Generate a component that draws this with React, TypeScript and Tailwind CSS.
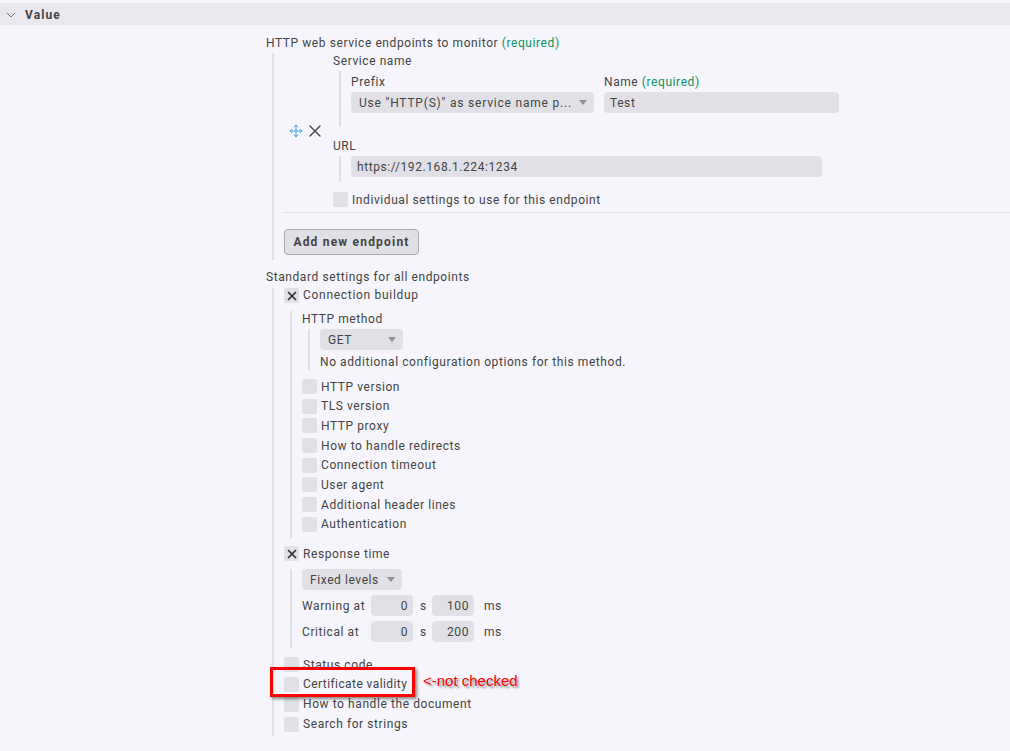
import { Move, X, ChevronDown } from 'lucide-react';
import type { ReactNode } from 'react';

function Caret() {
  return <span className="h-0 w-0 border-x-[4px] border-t-[5px] border-x-transparent border-t-[#8f8f95]" />;
}

function Checkbox({ checked = false, label, className = '', labelClass = 'pb-[2px]' }: { checked?: boolean; label: string; className?: string; labelClass?: string }) {
  return (
    <div className={`flex h-[15px] items-center ${className}`}>
      <span className="flex h-[15px] w-[15px] items-center justify-center rounded-[2px] bg-[#e0e0e6]">
        {checked && <X size={14} strokeWidth={3} className="text-[#333]" />}
      </span>
      <span className={`ml-[4px] ${labelClass}`}>{label}</span>
    </div>
  );
}

function Select({ label, className = '', labelClass = '' }: { label: string; className?: string; labelClass?: string }) {
  return (
    <div className={`flex h-[21px] items-center justify-between rounded-[4px] bg-[#e0e0e6] pl-[8px] pr-[7px] ${className}`}>
      <span className={`whitespace-nowrap ${labelClass}`}>{label}</span>
      <Caret />
    </div>
  );
}

function NumberBox({ value }: { value: string }) {
  return <div className="flex h-[21px] w-[42px] items-center justify-end rounded-[4px] bg-[#e0e0e6] pr-[5px]">{value}</div>;
}

function Nested({ children, className = '' }: { children: ReactNode; className?: string }) {
  return <div className={`border-l-2 border-[#dfdfe5] ${className}`}>{children}</div>;
}

const connectionOptions = [
  'HTTP version',
  'TLS version',
  'HTTP proxy',
  'How to handle redirects',
  'Connection timeout',
  'User agent',
  'Additional header lines',
  'Authentication',
];

export default function App() {
  return (
    <div className="relative h-[751px] w-[1010px] overflow-hidden bg-[#f5f5fb] pt-[3px] font-['Roboto',sans-serif] text-[12px] tracking-[0.58px] text-[#444]">
      {/* Section header */}
      <div className="flex h-[22px] items-center bg-[#e8e8ee] pl-[3px] pt-[1px] font-bold tracking-[1.1px] text-[#444]">
        <ChevronDown size={16} strokeWidth={1.2} className="text-[#555]" />
        <span className="ml-[6px]">Value</span>
      </div>

      <div className="pl-[266px]">
        <div className="flex h-[28px] items-end pb-[1px]">
          HTTP web service endpoints to monitor&nbsp;<span className="text-[#0c9464]">(required)</span>
        </div>

        <Nested className="ml-[6px] h-[207px] pl-[10px]">
          <div className="flex items-center">
            <div className="flex w-[49px] items-center pl-[5px] pt-[1px]">
              <Move size={14} strokeWidth={1.5} className="text-[#1e9fd6]" />
              <X size={20} strokeWidth={1.6} className="ml-[2px] text-[#444]" />
            </div>
            <div>
              <div className="flex h-[18px] items-center pb-[2px]">Service name</div>
              <Nested className="ml-[6px] mt-[0px] h-[56px] pl-[10px]">
                <div className="flex gap-[10px]">
                  <div className="w-[243px]">
                    <div className="flex h-[21px] items-end pb-[1px]">Prefix</div>
                    <Select label={'Use "HTTP(S)" as service name p...'} labelClass="tracking-[0.8px]" />
                  </div>
                  <div className="w-[235px]">
                    <div className="flex h-[21px] items-end pb-[1px]">
                      Name&nbsp;<span className="text-[#0c9464]">(required)</span>
                    </div>
                    <div className="flex h-[21px] items-center rounded-[4px] bg-[#e0e0e6] pl-[6px]">Test</div>
                  </div>
                </div>
              </Nested>
              <div className="flex h-[29px] items-end pb-[1px]">URL</div>
              <Nested className="ml-[6px] h-[26px] pl-[10px]">
                <div className="flex h-[21px] w-[471px] items-center rounded-[4px] bg-[#e0e0e6] pl-[6px]">
                  https://192.168.1.224:1234
                </div>
              </Nested>
              <Checkbox label="Individual settings to use for this endpoint" className="mt-[10px]" labelClass="" />
            </div>
          </div>
          <div className="mt-[5px] h-px bg-[#dfdfe5]" />
          <button className="mt-[16px] flex h-[26px] w-[135px] items-center justify-center rounded-[4px] border border-[#a9a9af] bg-[#e0e0e6] font-bold tracking-[1.2px] text-[#444]">
            Add new endpoint
          </button>
        </Nested>

        <div className="flex h-[28px] items-end pb-[2px]">Standard settings for all endpoints</div>

        <Nested className="ml-[6px] h-[448px] pl-[10px]">
          <Checkbox checked label="Connection buildup" labelClass="pb-[2px] tracking-[0.7px]" />
          <Nested className="ml-[6px] mt-[8px] h-[227px] pl-[10px]">
            <div className="flex h-[18px] items-center pb-[3px]">HTTP method</div>
            <Nested className="ml-[6px] h-[41px] pl-[10px]">
              <Select label="GET" className="w-[83px]" />
              <div className="mt-[4px] flex h-[16px] items-center whitespace-nowrap">No additional configuration options for this method.</div>
            </Nested>
            <div className="mt-[9px] flex flex-col gap-[4.7px]">
              {connectionOptions.map((option) => (
                <Checkbox key={option} label={option} labelClass="" />
              ))}
            </div>
          </Nested>
          <Checkbox checked label="Response time" className="mt-[8px]" labelClass="" />
          <Nested className="ml-[6px] mt-[8px] h-[79px] pl-[10px]">
            <Select label="Fixed levels" className="w-[100px]" />
            <div className="mt-[5px] flex items-center">
              <span className="w-[69px]">Warning at</span>
              <NumberBox value="0" />
              <span className="w-[19px] pl-[7px]">s</span>
              <NumberBox value="100" />
              <span className="ml-[10px]">ms</span>
            </div>
            <div className="mt-[5px] flex items-center">
              <span className="w-[69px]">Critical at</span>
              <NumberBox value="0" />
              <span className="w-[19px] pl-[7px]">s</span>
              <NumberBox value="200" />
              <span className="ml-[10px]">ms</span>
            </div>
          </Nested>
          <div className="mt-[9px] flex flex-col gap-[5px]">
            <Checkbox label="Status code" labelClass="" />
            <Checkbox label="Certificate validity" labelClass="pb-[2px] tracking-[0.42px]" />
            <Checkbox label="How to handle the document" />
            <Checkbox label="Search for strings" />
          </div>
        </Nested>
      </div>

      {/* Screenshot annotation */}
      <div className="absolute left-[270px] top-[667px] h-[30px] w-[145px] border-[3px] border-[#f00] shadow-[2px_2px_3px_rgba(0,0,0,0.45)]" />
      <div className="absolute left-[423px] top-[670px] font-['Liberation_Sans',sans-serif] text-[15px] tracking-[0px] text-[#f00] [text-shadow:2px_2px_2px_rgba(0,0,0,0.4)]">
        &lt;-not checked
      </div>
    </div>
  );
}
